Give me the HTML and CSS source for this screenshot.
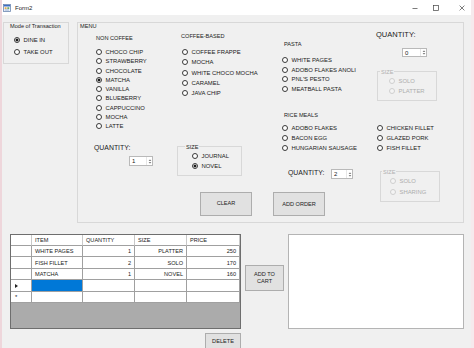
FILE: index.html
```html
<!DOCTYPE html>
<html>
<head>
<meta charset="utf-8">
<title>Form2</title>
<link rel="stylesheet" href="styles.css">
</head>
<body>
<div class="window">
  <div class="titlebar">
    <svg class="app-icon" viewBox="0 0 8 8">
      <rect x="0.5" y="0.5" width="7" height="7" fill="#fff" stroke="#6a86b0" stroke-width="0.8"/>
      <rect x="0.9" y="0.9" width="6.2" height="1.6" fill="#3d6fc4"/>
      <rect x="1.6" y="3.3" width="2" height="1.6" fill="#e0a040"/>
      <rect x="4.3" y="3.3" width="2" height="1.6" fill="#5aa05a"/>
      <rect x="1.6" y="5.4" width="4.7" height="1.2" fill="#9ab4d8"/>
    </svg>
    <span class="title">Form2</span>
    <span class="spacer"></span>
    <svg class="tb-btn tb-min" viewBox="0 0 6 6"><path d="M0.5 3.5H5.5" stroke="#444" stroke-width="0.7"/></svg>
    <svg class="tb-btn tb-max" viewBox="0 0 6 6"><rect x="0.6" y="0.6" width="4.8" height="4.8" fill="none" stroke="#444" stroke-width="0.7"/></svg>
    <svg class="tb-btn tb-close" viewBox="0 0 6 6"><path d="M0.6 0.6L5.4 5.4M5.4 0.6L0.6 5.4" stroke="#444" stroke-width="0.7"/></svg>
  </div>

  <div class="top">
    <div class="mode">
      <div class="cap mode-cap">Mode of Transaction</div>
      <div class="list mode-list">
        <div class="rb on"><i class="dot"></i>DINE IN</div>
        <div class="rb"><i class="dot"></i>TAKE OUT</div>
      </div>
    </div>

    <div class="menu">
      <div class="cap menu-cap">MENU</div>
      <div class="cols">
        <div class="col-a">
          <div class="cap nc-cap">NON COFFEE</div>
          <div class="list nc-list">
            <div class="rb"><i class="dot"></i>CHOCO CHIP</div>
            <div class="rb"><i class="dot"></i>STRAWBERRY</div>
            <div class="rb"><i class="dot"></i>CHOCOLATE</div>
            <div class="rb on"><i class="dot"></i>MATCHA</div>
            <div class="rb"><i class="dot"></i>VANILLA</div>
            <div class="rb"><i class="dot"></i>BLUEBERRY</div>
            <div class="rb"><i class="dot"></i>CAPPUCCINO</div>
            <div class="rb"><i class="dot"></i>MOCHA</div>
            <div class="rb"><i class="dot"></i>LATTE</div>
          </div>
          <div class="qty-lbl qa-lbl">QUANTITY:</div>
          <div class="num qa-num"><span class="val">1</span><span class="spin"><svg viewBox="0 0 5 8"><path d="M0.8 3.2L2.5 1.4L4.2 3.2Z M0.8 4.8L2.5 6.6L4.2 4.8Z" fill="#555"/></svg></span></div>
        </div>

        <div class="col-b">
          <div class="cap cb-cap">COFFEE-BASED</div>
          <div class="list cb-list">
            <div class="rb"><i class="dot"></i>COFFEE FRAPPE</div>
            <div class="rb"><i class="dot"></i>MOCHA</div>
            <div class="rb"><i class="dot"></i>WHITE CHOCO MOCHA</div>
            <div class="rb"><i class="dot"></i>CARAMEL</div>
            <div class="rb"><i class="dot"></i>JAVA CHIP</div>
          </div>
          <div class="gb size1">
            <div class="gb-cap s1-cap">SIZE</div>
            <div class="list s1-list">
              <div class="rb"><i class="dot"></i>JOURNAL</div>
              <div class="rb on"><i class="dot"></i>NOVEL</div>
            </div>
          </div>
          <button class="btn clear">CLEAR</button>
        </div>

        <div class="col-r">
          <div class="r-top">
            <div class="pasta">
              <div class="cap pasta-cap">PASTA</div>
              <div class="list pasta-list">
                <div class="rb"><i class="dot"></i>WHITE PAGES</div>
                <div class="rb"><i class="dot"></i>ADOBO FLAKES ANOLI</div>
                <div class="rb"><i class="dot"></i>PNL'S PESTO</div>
                <div class="rb"><i class="dot"></i>MEATBALL PASTA</div>
              </div>
            </div>
            <div class="qcol">
              <div class="qty-lbl big">QUANTITY:</div>
              <div class="num qp-num"><span class="val">0</span><span class="spin"><svg viewBox="0 0 5 8"><path d="M0.8 3.2L2.5 1.4L4.2 3.2Z M0.8 4.8L2.5 6.6L4.2 4.8Z" fill="#555"/></svg></span></div>
              <div class="gb dis size2">
                <div class="gb-cap s2-cap">SIZE</div>
                <div class="list s2-list">
                  <div class="rb"><i class="dot"></i>SOLO</div>
                  <div class="rb"><i class="dot"></i>PLATTER</div>
                </div>
              </div>
            </div>
          </div>

          <div class="cap rice-cap">RICE MEALS</div>
          <div class="rice">
            <div class="list rice-l">
              <div class="rb"><i class="dot"></i>ADOBO FLAKES</div>
              <div class="rb"><i class="dot"></i>BACON EGG</div>
              <div class="rb"><i class="dot"></i>HUNGARIAN SAUSAGE</div>
            </div>
            <div class="list rice-r">
              <div class="rb"><i class="dot"></i>CHICKEN FILLET</div>
              <div class="rb"><i class="dot"></i>GLAZED PORK</div>
              <div class="rb"><i class="dot"></i>FISH FILLET</div>
            </div>
          </div>

          <div class="r-bot">
            <div class="rb-left">
              <div class="qrow">
                <span class="qty-lbl qr-lbl">QUANTITY:</span>
                <div class="num qr-num"><span class="val">2</span><span class="spin"><svg viewBox="0 0 5 8"><path d="M0.8 3.2L2.5 1.4L4.2 3.2Z M0.8 4.8L2.5 6.6L4.2 4.8Z" fill="#555"/></svg></span></div>
              </div>
              <button class="btn add">ADD ORDER</button>
            </div>
            <div class="gb dis size3">
              <div class="gb-cap s3-cap">SIZE</div>
              <div class="list s3-list">
                <div class="rb"><i class="dot"></i>SOLO</div>
                <div class="rb"><i class="dot"></i>SHARING</div>
              </div>
            </div>
          </div>
        </div>
      </div>
    </div>
  </div>

  <div class="bottom">
    <div class="dgv">
      <div class="c h"></div><div class="c h">ITEM</div><div class="c h">QUANTITY</div><div class="c h">SIZE</div><div class="c h">PRICE</div>
      <div class="c"></div><div class="c">WHITE PAGES</div><div class="c r">1</div><div class="c r">PLATTER</div><div class="c r">250</div>
      <div class="c"></div><div class="c">FISH FILLET</div><div class="c r">2</div><div class="c r">SOLO</div><div class="c r">170</div>
      <div class="c"></div><div class="c">MATCHA</div><div class="c r">1</div><div class="c r">NOVEL</div><div class="c r">160</div>
      <div class="c ind"><svg class="tri" viewBox="0 0 3 4"><path d="M0 0L3 2L0 4Z" fill="#222"/></svg></div><div class="c sel"></div><div class="c"></div><div class="c"></div><div class="c"></div>
      <div class="c ind star">*</div><div class="c"></div><div class="c"></div><div class="c"></div><div class="c"></div>
    </div>
    <button class="btn cart">ADD TO<br>CART</button>
    <div class="textbox"></div>
  </div>
  <button class="btn del">DELETE</button>
</div>
</body>
</html>
```

FILE: styles.css
```css
* { box-sizing: border-box; margin: 0; padding: 0; }
html, body { margin: 0; background: #f0f0f0; }
body {
  font-family: "Liberation Sans", Arial, sans-serif;
  font-size: 5.9px;
  color: #1a1a1a;
}

.window {
  width: 474px;
  height: 348px;
  overflow: hidden;
  background: #f0f0f0;
  border-left: 2px solid #eed6db;
  border-right: 3px solid #f6eaed;
  display: flex;
  flex-direction: column;
}

/* title bar */
.titlebar {
  flex: none;
  height: 15px;
  background: #fff;
  display: flex;
  align-items: center;
}
.app-icon { width: 8px; height: 8px; margin-left: 1px; flex: none; }
.title { margin-left: 4px; font-size: 6px; color: #222; }
.spacer { flex: 1; }
.tb-btn { width: 6px; height: 6px; flex: none; }
.tb-max { margin-left: 15px; }
.tb-close { margin-left: 20px; margin-right: 6px; }

/* captions */
.cap {
  font-size: 5.6px;
  line-height: 8px;
  color: #222;
  white-space: nowrap;
}
.gb-cap {
  font-size: 5.6px;
  line-height: 6px;
  width: fit-content;
  padding: 0 1px;
  background: #f0f0f0;
  color: #222;
  margin-top: -3px;
  margin-bottom: -3px;
}

/* radio buttons */
.rb {
  display: flex;
  align-items: center;
  height: var(--rh, 10px);
  white-space: nowrap;
}
.dot {
  flex: none;
  width: 6px;
  height: 6px;
  border: 0.8px solid #3a3a3a;
  border-radius: 50%;
  background: #fff;
  margin-right: 3.5px;
}
.on .dot {
  background: radial-gradient(circle, #1a1a1a 0 1.3px, #fff 1.7px);
}
.dis .rb { color: #adadad; }
.dis .dot { border-color: #cfcfcf; background: #f4f4f4; }
.dis .gb-cap { color: #b0b0b0; }

/* group boxes */
.gb { border: 1px solid #d8d8d8; }

.mode {
  margin: 7px 0 0 1px;
  width: 66px;
  height: 42px;
  border: 1px solid #d8d8d8;
  flex: none;
}
.mode-cap { line-height: 6px; margin-left: 6px; }
.mode-list { margin: 5px 0 0 10px; --rh: 12px; }

.top {
  flex: none;
  height: 208px;
  display: flex;
  align-items: flex-start;
}
.menu {
  margin: 7px 0 0 8px;
  width: 387px;
  height: 201px;
  border: 1px solid #d8d8d8;
  flex: none;
}
.menu-cap { line-height: 6px; margin: 0 0 -6px 2px; }
.cols { display: flex; align-items: flex-start; }

/* column A: non coffee */
.col-a { width: 99px; flex: none; }
.nc-cap { margin: 11px 0 0 18px; }
.nc-list { margin: 5.4px 0 0 18px; --rh: 9.25px; }
.qty-lbl {
  font-size: 6.9px;
  line-height: 10px;
  color: #222;
  white-space: nowrap;
}
.qa-lbl { margin: 12.4px 0 0 16px; }

.num {
  display: flex;
  background: #fff;
  border: 1px solid #b9b9b9;
  font-size: 6px;
}
.num .val { flex: 1; padding-left: 2px; display: flex; align-items: center; }
.num .spin {
  width: 6px;
  border-left: 1px solid #e6e6e6;
  display: flex;
  align-items: center;
  justify-content: center;
}
.num .spin svg { width: 4px; height: 7px; }
.qa-num { margin: 3px 0 0 51px; width: 24px; height: 10px; }

/* column B: coffee based */
.col-b { width: 93px; flex: none; }
.cb-cap { margin: 9px 0 0 4px; }
.cb-list { margin: 6.85px 0 0 5px; --rh: 10.3px; }
.size1 { margin: 47.65px 0 0 0; width: 65px; height: 30px; }
.s1-cap { margin-left: 7px; }
.s1-list { margin: 4px 0 0 14px; --rh: 10px; }

.btn {
  display: flex;
  align-items: center;
  justify-content: center;
  text-align: center;
  font-family: inherit;
  font-size: 5.6px;
  line-height: 7px;
  color: #222;
  background: #e1e1e1;
  border: 1px solid #adadad;
  flex: none;
}
.clear { margin: 16px 0 0 23px; width: 52px; height: 24px; }

/* right part */
.col-r { width: 193px; flex: none; }
.r-top { display: flex; align-items: flex-start; }
.pasta { width: 106px; flex: none; }
.pasta-cap { margin: 17px 0 0 14px; }
.pasta-list { margin: 7.15px 0 0 12px; --rh: 9.7px; }
.qcol { width: 87px; flex: none; }
.qty-lbl.big { font-size: 7.5px; margin-top: 7px; }
.qp-num { margin: 8px 0 0 26px; width: 25px; height: 9px; }
.size2 { margin: 14px 0 0 1px; width: 60px; height: 30px; }
.s2-cap { margin-left: 2px; }
.s2-list { margin: 4px 0 0 11px; --rh: 10px; }

.rice-cap { margin: 10px 0 0 14px; }
.rice { display: flex; margin-top: 4px; }
.rice-l { margin-left: 12px; width: 95px; --rh: 10px; flex: none; }
.rice-r { --rh: 10px; }

.r-bot { display: flex; align-items: flex-start; }
.rb-left { width: 107px; flex: none; }
.qrow { display: flex; align-items: flex-start; margin: 15px 0 0 18px; }
.qr-lbl { width: 40px; flex: none; }
.qr-num { margin: 1px 0 0 3px; width: 22px; height: 10px; }
.add { margin: 13px 0 0 3px; width: 52px; height: 24px; }
.size3 { margin: 18px 0 0 3px; width: 60px; height: 31px; }
.s3-cap { margin-left: 1px; }
.s3-list { margin: 3.75px 0 0 9px; --rh: 10.5px; }

/* bottom area */
.bottom {
  flex: none;
  display: flex;
  align-items: flex-start;
  margin-top: 11px;
}
.dgv {
  margin-left: 8px;
  width: 231px;
  height: 95px;
  flex: none;
  display: grid;
  grid-template-columns: 21px 51px 52px 52px 53px;
  grid-template-rows: 11px 11px 12px 11px 12px 11px;
  align-content: start;
  background: #ababab;
  border: 1px solid #6e6e6e;
  font-size: 5.6px;
}
.c {
  background: #fff;
  border-right: 1px solid #a0a0a0;
  border-bottom: 1px solid #a0a0a0;
  padding: 0 3px;
  display: flex;
  align-items: center;
  white-space: nowrap;
  overflow: hidden;
  color: #1a1a1a;
}
.c.h { border-right-color: #c9c9c9; border-bottom-color: #a0a0a0; }
.c.r { justify-content: flex-end; }
.c.sel { background: #0078d7; }
.c.ind { padding-left: 4px; }
.tri { width: 3px; height: 4px; }
.star { font-size: 6px; }

.cart { margin: 31px 0 0 4px; width: 39px; height: 26px; }
.textbox {
  margin-left: 4px;
  width: 176px;
  height: 95px;
  flex: none;
  background: #fff;
  border: 1px solid #b4b4b4;
}
.del { margin: 4px 0 0 203px; width: 36px; height: 16px; }
```
